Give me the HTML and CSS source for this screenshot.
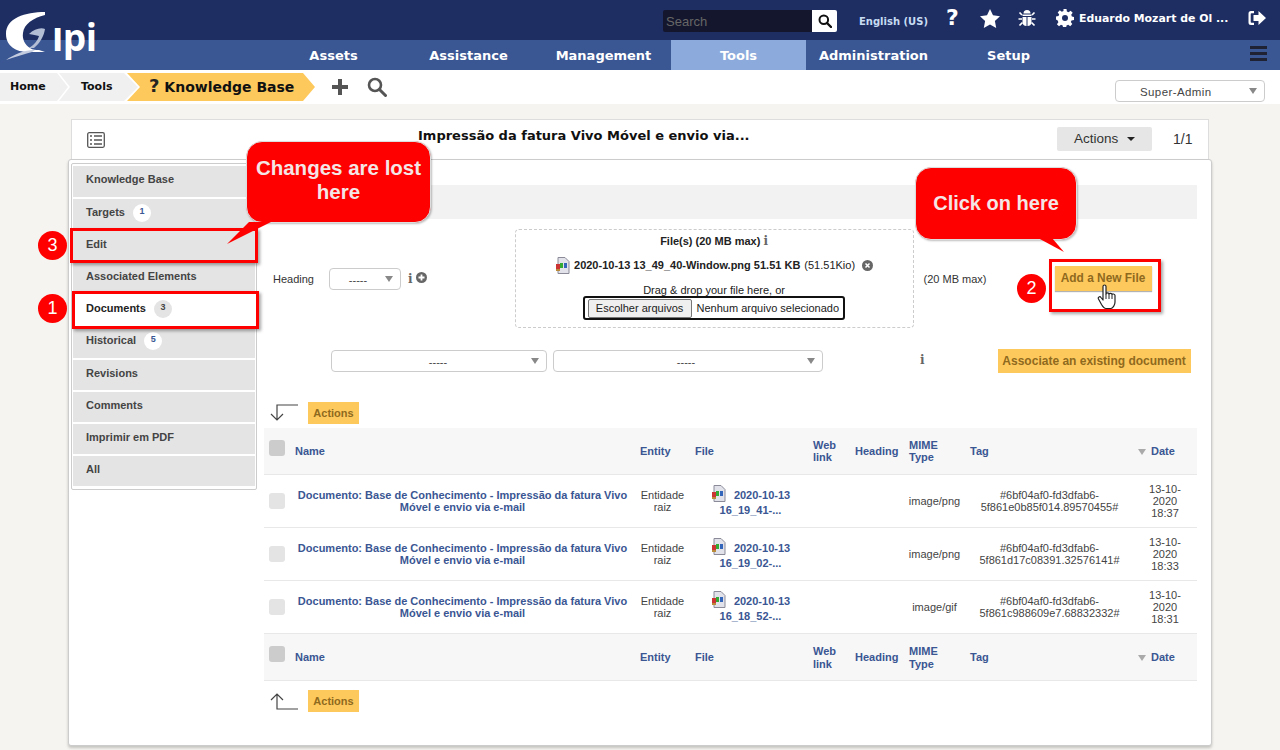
FILE: index.html
```html
<!DOCTYPE html>
<html lang="en">
<head>
    <meta charset="UTF-8">
    <title>Knowledge Base - GLPI</title>
    <link rel="stylesheet" href="styles.css">
</head>
<body>

    <!-- Header -->
    <div class="topbar">
        <div class="search-box">
            <span class="search-input">Search</span>
            <span class="search-btn">
                <svg width="14" height="14" viewBox="0 0 14 14"><circle cx="5.800" cy="5.800" r="4.300" fill="none" stroke="#111" stroke-width="2"/><path d="M9 9l4 4" stroke="#111" stroke-width="2.400" stroke-linecap="round"/></svg>
            </span>
        </div>
        <span class="lang">English (US)</span>
        <span class="help">?</span>
        <svg class="top-icon star" width="20" height="19" viewBox="0 0 20 19"><path d="M10 0l3 6.300 7 .9-5.100 4.800 1.300 6.900L10 15.600 3.800 18.900l1.300-6.900L0 7.200l7-.9z" fill="#fff"/></svg>
        <svg class="top-icon bug" width="18" height="18" viewBox="0 0 18 18"><path d="M5.500 4.500a3.500 3.500 0 0 1 7 0z" fill="#fff"/><path d="M4.500 5.500h9v1.500H4.500zM4.500 8h4v9c-2.500 0-4-1.500-4-4zM9.500 8h4v5c0 2.500-1.500 4-4 4z" fill="#fff"/><path d="M4 6L1.500 3.500M14 6l2.500-2.500M4 10H.5M14 10h3.500M4.500 13.500L1.500 16.500M13.500 13.500l3 3" stroke="#fff" stroke-width="1.700"/></svg>
        <svg class="top-icon gear" width="18" height="18" viewBox="0 0 18 18"><path d="M7.500 0h3l.4 2.500 1.700.7 2-1.500 2.100 2.100-1.500 2 .7 1.700 2.100.5v3l-2.500.4-.7 1.700 1.500 2-2.100 2.100-2-1.500-1.700.7-.4 2.600h-3l-.4-2.500-1.700-.7-2 1.500-2.100-2.100 1.500-2-.7-1.700L0 10.500v-3l2.500-.4.700-1.700-1.500-2 2.100-2.100 2 1.500 1.700-.7z" fill="#fff"/><circle cx="9" cy="9" r="3" fill="#1e2e63"/></svg>
        <span class="user">Eduardo Mozart de Ol ...</span>
        <svg class="top-icon logout" width="18" height="16" viewBox="0 0 18 16"><path d="M6 1H3a2.500 2.500 0 0 0-2.500 2.500v9A2.500 2.500 0 0 0 3 15h3v-2.200H3.500a.8.800 0 0 1-.8-.8V4a.8.800 0 0 1 .8-.8H6z" fill="#fff"/><path d="M10.500 1L18 8l-7.500 7v-4H5.500V5h5z" fill="#fff"/></svg>
    </div>

    <div class="mainnav">
        <a href="#">Assets</a>
        <a href="#">Assistance</a>
        <a href="#">Management</a>
        <a href="#" class="active">Tools</a>
        <a href="#">Administration</a>
        <a href="#">Setup</a>
        <div class="burger"><div></div><div></div><div></div></div>
    </div>

    <!-- Logo lies over both header bars -->
    <div class="logo">
        <svg class="logo-g" width="48" height="50" viewBox="0 0 48 50"><path d="M40 0C20 0 1 6 1 22c0 12 10 18 22 18h17l-6-2c-3 0-6 0-9-2-5-3-8-9-7-15C19 12 28 6 40 3z" fill="#fff"/><path d="M24 22c5-5 12-7 16-5-1 7-5 14-11 19l-5 0c5-3 9-8 10-12-3-1-6-1-10-2z" fill="#b3bed5"/><path d="M1 48c9-6 18-10 29-10l-3 2C19 42 10 45 1 48z" fill="#c4cde0"/></svg>
        <span class="logo-text"><span class="logo-l">l</span>pi</span>
    </div>

    <!-- Breadcrumb -->
    <div class="crumbbar">
        <a href="#" class="crumb crumb-home">Home</a>
        <a href="#" class="crumb crumb-tools">Tools</a>
        <a href="#" class="crumb crumb-current"><b>?</b> Knowledge Base</a>
        <svg class="crumb-add" width="18" height="18" viewBox="0 0 18 18"><path d="M7 1h4v6h6v4h-6v6H7v-6H1V7h6z" fill="#555"/></svg>
        <svg class="crumb-search" width="20" height="20" viewBox="0 0 20 20"><circle cx="8" cy="8" r="6" fill="none" stroke="#555" stroke-width="2.600"/><path d="M12.500 12.500l6 6" stroke="#555" stroke-width="3" stroke-linecap="round"/></svg>
        <div class="profile"><span>Super-Admin</span><i class="caret"></i></div>
    </div>

    <!-- Page -->
    <div class="page">
        <div class="titlebar">
            <svg class="list-icon" width="18" height="16" viewBox="0 0 18 16"><rect x=".7" y=".7" width="16.600" height="14.600" rx="1.500" fill="none" stroke="#555" stroke-width="1.300"/><path d="M3 4h2M3 8h2M3 12h2M7 4h8M7 8h8M7 12h8" stroke="#555" stroke-width="1.500"/></svg>
            <span class="record-title">Impressão da fatura Vivo Móvel e envio via...</span>
            <span class="actions-btn">Actions <i class="caret-dark"></i></span>
            <span class="pager">1/1</span>
        </div>

        <div class="mainbox">
            <ul class="tabs">
                <li>Knowledge Base</li>
                <li>Targets <span class="count">1</span></li>
                <li>Edit</li>
                <li>Associated Elements</li>
                <li class="current">Documents <span class="count">3</span></li>
                <li>Historical <span class="count">5</span></li>
                <li>Revisions</li>
                <li>Comments</li>
                <li>Imprimir em PDF</li>
                <li>All</li>
            </ul>

            <div class="tab-content">
                <div class="form-head"></div>

                <div class="upload-row">
                    <span class="form-label">Heading</span>
                    <div class="select select-heading"><span>-----</span><i class="caret"></i></div>
                    <span class="info">i</span>
                    <svg class="plus-icon" width="11" height="11" viewBox="0 0 11 11"><circle cx="5.500" cy="5.500" r="5.500" fill="#666"/><path d="M5.500 2.500v6M2.500 5.500h6" stroke="#fff" stroke-width="1.800"/></svg>

                    <div class="dropzone">
                        <div class="drop-title">File(s) (20 MB max) <span class="info">i</span></div>
                        <div class="drop-file">
                            <svg width="15" height="17" viewBox="0 0 15 17"><use href="#file-icon"/></svg>
                            <b>2020-10-13 13_49_40-Window.png 51.51 KB</b> (51.51Kio)
                            <svg class="remove-icon" width="11" height="11" viewBox="0 0 11 11"><circle cx="5.500" cy="5.500" r="5.500" fill="#666"/><path d="M3.500 3.500l4 4M7.500 3.500l-4 4" stroke="#fff" stroke-width="1.500"/></svg>
                        </div>
                        <div class="drop-hint">Drag &amp; drop your file here, or</div>
                        <div class="file-input"><span class="file-btn">Escolher arquivos</span><span>Nenhum arquivo selecionado</span></div>
                    </div>

                    <span class="max-size">(20 MB max)</span>
                    <span class="btn btn-add">Add a New File</span>
                </div>

                <div class="associate-row">
                    <div class="select select-a"><span>-----</span><i class="caret"></i></div>
                    <div class="select select-b"><span>-----</span><i class="caret"></i></div>
                    <span class="info">i</span>
                    <span class="btn btn-associate">Associate an existing document</span>
                </div>

                <div class="massive massive-top">
                    <svg width="30" height="18" viewBox="0 0 30 18"><path d="M29 1H8v15M2 10l6 6 6-6" fill="none" stroke="#444" stroke-width="1.200"/></svg>
                    <span class="btn btn-small">Actions</span>
                </div>

                <table class="doc-table">
                    <thead>
                        <tr>
                            <th class="col-check"><span class="check check-head"></span></th>
                            <th class="col-name">Name</th>
                            <th class="col-entity">Entity</th>
                            <th class="col-file">File</th>
                            <th class="col-web">Web link</th>
                            <th class="col-heading">Heading</th>
                            <th class="col-mime">MIME<br>Type</th>
                            <th class="col-tag">Tag</th>
                            <th class="col-date"><i class="sort"></i>Date</th>
                        </tr>
                    </thead>
                    <tbody>
                        <tr>
                            <td><span class="check"></span></td>
                            <td class="doc-name">Documento: Base de Conhecimento - Impressão da fatura Vivo Móvel e envio via e-mail</td>
                            <td class="doc-entity">Entidade raiz</td>
                            <td class="doc-file"><svg width="15" height="17" viewBox="0 0 15 17"><use href="#file-icon"/></svg> 2020-10-13<br>16_19_41-...</td>
                            <td></td>
                            <td></td>
                            <td class="doc-mime">image/png</td>
                            <td>#6bf04af0-fd3dfab6-<br>5f861e0b85f014.89570455#</td>
                            <td>13-10-<br>2020<br>18:37</td>
                        </tr>
                        <tr>
                            <td><span class="check"></span></td>
                            <td class="doc-name">Documento: Base de Conhecimento - Impressão da fatura Vivo Móvel e envio via e-mail</td>
                            <td class="doc-entity">Entidade raiz</td>
                            <td class="doc-file"><svg width="15" height="17" viewBox="0 0 15 17"><use href="#file-icon"/></svg> 2020-10-13<br>16_19_02-...</td>
                            <td></td>
                            <td></td>
                            <td class="doc-mime">image/png</td>
                            <td>#6bf04af0-fd3dfab6-<br>5f861d17c08391.32576141#</td>
                            <td>13-10-<br>2020<br>18:33</td>
                        </tr>
                        <tr>
                            <td><span class="check"></span></td>
                            <td class="doc-name">Documento: Base de Conhecimento - Impressão da fatura Vivo Móvel e envio via e-mail</td>
                            <td class="doc-entity">Entidade raiz</td>
                            <td class="doc-file"><svg width="15" height="17" viewBox="0 0 15 17"><use href="#file-icon"/></svg> 2020-10-13<br>16_18_52-...</td>
                            <td></td>
                            <td></td>
                            <td class="doc-mime">image/gif</td>
                            <td>#6bf04af0-fd3dfab6-<br>5f861c988609e7.68832332#</td>
                            <td>13-10-<br>2020<br>18:31</td>
                        </tr>
                    </tbody>
                    <tfoot>
                        <tr>
                            <th><span class="check check-head"></span></th>
                            <th class="col-name">Name</th>
                            <th class="col-entity">Entity</th>
                            <th class="col-file">File</th>
                            <th class="col-web">Web link</th>
                            <th class="col-heading">Heading</th>
                            <th class="col-mime">MIME<br>Type</th>
                            <th class="col-tag">Tag</th>
                            <th class="col-date"><i class="sort"></i>Date</th>
                        </tr>
                    </tfoot>
                </table>

                <div class="massive massive-bottom">
                    <svg width="30" height="18" viewBox="0 0 30 18"><path d="M29 17H8V2M2 8l6-6 6 6" fill="none" stroke="#444" stroke-width="1.200"/></svg>
                    <span class="btn btn-small">Actions</span>
                </div>
            </div>
        </div>
    </div>

    <!-- Screenshot annotations -->
    <div class="mark mark-edit"></div>
    <div class="mark mark-docs"></div>
    <div class="mark mark-add"></div>
    <span class="step step-3">3</span>
    <span class="step step-1">1</span>
    <span class="step step-2">2</span>

    <div class="callout callout-lost">Changes are lost here</div>
    <svg class="tail tail-lost" width="60" height="40" viewBox="0 0 60 40"><path d="M22 0L0 22 44 0z" fill="#f00"/></svg>
    <div class="callout callout-click">Click on here</div>
    <svg class="tail tail-click" width="30" height="20" viewBox="0 0 30 20"><path d="M0 0L26 14 14 0z" fill="#f00"/></svg>

    <svg class="hand" width="20" height="26" viewBox="0 0 20 26"><path d="M6 2.500a1.500 1.500 0 0 1 3 0V10c0-1.500 3-1.500 3 0 0-1 3-1 3 .5 0-.8 3-.8 3 1V18c0 3-2 6-4 6.500H9C7 24.500 6 23 4.500 20.500L1.500 15c-1-2 1.500-3 2.500-1.500L6 16z" fill="#fff" stroke="#222" stroke-width="1.200" stroke-linejoin="round"/><path d="M9 10v5M12 10v5M15 11v4" stroke="#222"/></svg>

    <svg class="defs">
        <symbol id="file-icon" viewBox="0 0 15 17">
            <path d="M3 .5h7l4 4v12H3z" fill="#e2e2ea" stroke="#8a8a99"/>
            <rect x="1" y="7" width="4" height="5" fill="#c33"/>
            <rect x="5" y="6" width="3" height="5" fill="#3a3"/>
            <rect x="9" y="6" width="3" height="5" fill="#36b"/>
            <rect x="1" y="12" width="4" height="2" fill="#b98a3a"/>
        </symbol>
    </svg>

</body>
</html>
```

FILE: styles.css
```css
/* General Reset */
* {
    margin: 0;
    padding: 0;
    box-sizing: border-box;
}

html, body {
    height: 750px;
    overflow: hidden;
}

body {
    position: relative;
    font-family: "Liberation Sans", Arial, sans-serif;
    font-size: 11px;
    color: #333;
    background-color: #f5f4f0;
}

a {
    text-decoration: none;
}

/* Top bar */
.topbar {
    height: 40px;
    background-color: #1e2e63;
    display: flex;
    align-items: center;
    padding-left: 663px;
    font-family: "DejaVu Sans", sans-serif;
    color: #fff;
}

.search-box {
    display: flex;
    width: 174px;
    height: 22px;
    margin-top: 2px;
    border-radius: 2px;
    overflow: hidden;
}

.search-input {
    flex: 1;
    background-color: #14162e;
    color: #666;
    line-height: 24px;
    padding-left: 3px;
    font-family: "Liberation Sans", sans-serif;
    font-size: 13px;
}

.search-btn {
    width: 25px;
    background-color: #fff;
    display: flex;
    align-items: center;
    justify-content: center;
}

.lang {
    margin-left: 22px;
    margin-top: 2px;
    width: 68px;
    white-space: nowrap;
    font-size: 10px;
    font-weight: bold;
    color: #c7dcf2;
}

.help {
    margin-left: 19px;
    margin-top: -6px;
    font-size: 22px;
    font-weight: bold;
    width: 15px;
}

.top-icon {
    display: block;
}

.star {
    margin-left: 19px;
    margin-top: -4px;
}

.bug {
    margin-left: 18px;
    margin-top: -4px;
}

.gear {
    margin-left: 20px;
    margin-top: -4px;
}

.user {
    margin-left: 5px;
    margin-top: -4px;
    width: 150px;
    white-space: nowrap;
    font-size: 10.900px;
    font-weight: bold;
}

.logout {
    margin-left: 19px;
    margin-top: -4px;
}

/* Main menu */
.mainnav {
    height: 30px;
    background-color: #3a5693;
    display: flex;
    padding-left: 266px;
    position: relative;
    font-family: "DejaVu Sans", sans-serif;
}

.mainnav a {
    width: 135px;
    text-align: center;
    line-height: 32px;
    font-size: 13px;
    font-weight: bold;
    color: #fff;
}

.mainnav a.active {
    background-color: #8caadb;
}

.burger {
    position: absolute;
    right: 13px;
    top: 6px;
    width: 17px;
}

.burger div {
    height: 3px;
    margin-bottom: 3px;
    background-color: #1e2233;
}

/* Logo */
.logo {
    position: absolute;
    left: 5px;
    top: 12px;
    display: flex;
    align-items: flex-start;
}

.logo-g {
    display: block;
}

.logo-text {
    font-family: "Open Sans", sans-serif;
    font-size: 37px;
    font-weight: 700;
    line-height: 48px;
    letter-spacing: -0.5px;
    color: #fff;
    margin-left: -1px;
    margin-top: 1px;
}

/* the l of the logo is cut down so it sits just above the other letters */
.logo-l {
    display: inline-block;
    clip-path: inset(15px 0 0 0);
}

/* Breadcrumb */
.crumbbar {
    height: 34px;
    background-color: #fff;
    display: flex;
    align-items: flex-start;
    padding-top: 3px;
    position: relative;
    font-family: "DejaVu Sans", sans-serif;
}

.crumb {
    display: block;
    height: 28px;
    line-height: 27px;
    font-size: 11px;
    font-weight: bold;
    color: #111;
    background-color: #f0f0f0;
}

.crumb-home {
    width: 68px;
    padding-left: 10px;
    clip-path: polygon(0 0, 57px 0, 68px 50%, 57px 100%, 0 100%);
}

.crumb-tools {
    width: 79px;
    margin-left: -9px;
    padding-left: 22px;
    clip-path: polygon(0 0, 65px 0, 79px 50%, 65px 100%, 0 100%, 11px 50%);
}

.crumb-current {
    width: 188px;
    margin-left: -11px;
    padding-left: 22px;
    font-size: 14px;
    line-height: 28px;
    background-color: #fec95c;
    clip-path: polygon(0 0, 176px 0, 188px 50%, 176px 100%, 0 100%, 13px 50%);
}

.crumb-current b {
    font-size: 18px;
    line-height: 18px;
    color: #222;
}

.crumb-add {
    margin-left: 16px;
    margin-top: 5px;
}

.crumb-search {
    margin-left: 18px;
    margin-top: 4px;
}

.profile {
    position: absolute;
    left: 1115px;
    top: 10px;
    width: 150px;
    height: 22px;
    border: 1px solid #ccc;
    border-radius: 4px;
    background-color: #fff;
    line-height: 22px;
    padding-left: 24px;
    font-family: "Liberation Sans", sans-serif;
    font-size: 11.500px;
    letter-spacing: 0.4px;
    color: #444;
}

.caret {
    position: absolute;
    right: 7px;
    top: 7px;
    width: 0;
    height: 0;
    border-left: 4px solid transparent;
    border-right: 4px solid transparent;
    border-top: 6px solid #888;
}

/* Page */
.page {
    padding: 15px 68px 0;
}

.titlebar {
    height: 41px;
    margin: 0 3px;
    background-color: #fff;
    border: 1px solid #ddd;
    display: flex;
    align-items: flex-start;
    padding-left: 15px;
}

.list-icon {
    margin-top: 12px;
}

.record-title {
    margin-left: 313px;
    margin-top: 8px;
    width: 639px;
    white-space: nowrap;
    font-family: "DejaVu Sans", sans-serif;
    font-size: 13px;
    font-weight: bold;
    color: #111;
}

.actions-btn {
    width: 95px;
    height: 24px;
    margin-top: 7px;
    background-color: #e6e6e6;
    border-radius: 2px;
    text-align: center;
    line-height: 24px;
    font-size: 13.500px;
    color: #333;
}

.caret-dark {
    display: inline-block;
    width: 0;
    height: 0;
    margin-left: 5px;
    vertical-align: 2px;
    border-left: 4px solid transparent;
    border-right: 4px solid transparent;
    border-top: 4px solid #222;
}

.pager {
    margin-left: 21px;
    margin-top: 11px;
    font-size: 14px;
}

.mainbox {
    height: 587px;
    margin-top: -1px;
    position: relative;
    background-color: #fff;
    border: 1px solid #ccc;
    border-radius: 3px;
    box-shadow: 0 2px 3px rgba(0, 0, 0, 0.2);
    display: flex;
}

/* Tabs */
.tabs {
    list-style: none;
    width: 186px;
    height: 327px;
    margin: 3px 0 0 2px;
    border: 1px solid #ccc;
    border-radius: 2px;
    flex-shrink: 0;
    padding: 2.400px 1px 0;
}

.tabs li {
    height: 30.200px;
    margin-bottom: 2px;
    background-color: #e4e4e4;
    line-height: 27px;
    padding-left: 13px;
    font-weight: bold;
    color: #444;
}

.tabs li.current {
    background-color: #fff;
    color: #222;
}

.count {
    display: inline-block;
    width: 18px;
    height: 18px;
    margin-left: 5px;
    border-radius: 50%;
    background-color: #fff;
    text-align: center;
    font-size: 9px;
    line-height: 14px;
    vertical-align: 2px;
    color: #3a5693;
}

.current .count {
    background-color: #e4e4e4;
    color: #444;
}

/* Documents tab */
.tab-content {
    flex: 1;
    padding: 25px 14px 0 7px;
    position: relative;
}

.form-head {
    height: 34px;
    background-color: #f2f2f2;
}

.upload-row {
    display: flex;
    align-items: center;
    height: 99px;
    margin-top: 10px;
    padding-left: 9px;
    font-size: 11px;
}

.form-label {
    width: 56px;
}

.select {
    position: relative;
    height: 22px;
    background-color: #fff;
    border: 1px solid #ccc;
    border-radius: 4px;
    line-height: 22px;
    text-align: center;
    font-size: 11px;
    color: #444;
}

.select-heading {
    width: 72px;
    padding-right: 14px;
    margin-right: 7px;
}

.info {
    font-family: "DejaVu Serif", serif;
    font-weight: bold;
    font-size: 12px;
    color: #666;
}

.plus-icon {
    margin-left: 3px;
    margin-top: -2px;
}

.dropzone {
    width: 399px;
    height: 99px;
    margin-left: 88px;
    border: 1px dashed #ccc;
    border-radius: 4px;
    text-align: center;
    padding-top: 4px;
    color: #222;
}

.drop-title {
    height: 16px;
    font-weight: bold;
}

.drop-file {
    height: 30px;
    display: flex;
    align-items: center;
    justify-content: center;
    gap: 4px;
}

.drop-file b {
    font-weight: bold;
}

.remove-icon {
    margin-left: 3px;
}

.drop-hint {
    margin-top: 4px;
    line-height: 13px;
}

.file-input {
    display: flex;
    align-items: center;
    width: 262px;
    height: 24px;
    margin: -1px 0 0 67px;
    border: 2px solid #111;
    border-radius: 3px;
    gap: 5px;
    line-height: 17px;
    white-space: nowrap;
}

.file-btn {
    display: block;
    width: 104px;
    height: 19px;
    line-height: 16px;
    margin-left: 3px;
    background-color: #efefef;
    border: 1px solid #777;
    border-radius: 2px;
}

.max-size {
    margin-left: 10px;
    width: 131px;
}

.btn {
    background-color: #fec95c;
    color: #8f6a1e;
    font-weight: bold;
    text-align: center;
}

.btn-add {
    width: 97px;
    height: 25px;
    line-height: 24px;
    font-size: 11.900px;
    box-shadow: 0 1px 1px rgba(0, 0, 0, 0.3);
}

.associate-row {
    display: flex;
    align-items: center;
    height: 24px;
    margin-top: 21px;
    padding-left: 67px;
}

.select-a {
    width: 216px;
    padding-right: 2px;
}

.select-b {
    width: 270px;
    margin-left: 6px;
    padding-right: 4px;
}

.associate-row .info {
    margin-left: 97px;
    margin-top: -3px;
}

.btn-associate {
    width: 193px;
    height: 24px;
    margin-left: 73px;
    line-height: 24px;
    font-size: 12px;
}

.massive {
    display: flex;
    align-items: center;
    gap: 9px;
    height: 22px;
    padding-left: 5px;
}

.massive-top {
    margin-top: 29px;
}

.massive-bottom {
    margin-top: 9px;
}

.btn-small {
    width: 51px;
    height: 22px;
    line-height: 22px;
}

/* Documents table */
.doc-table {
    width: 933px;
    margin-top: 4px;
    border-collapse: collapse;
    table-layout: fixed;
    font-size: 11px;
    line-height: 12.300px;
}

.doc-table th {
    height: 46px;
    background-color: #f7f7f7;
    color: #3a5693;
    text-align: left;
    font-weight: bold;
    padding: 1px 0 0 4px;
}

.doc-table tfoot th {
    height: 47px;
    padding-top: 2px;
}

.doc-table thead tr {
    border-bottom: 1px solid #e8e8e8;
}

.doc-table tfoot tr {
    border-bottom: 1px solid #e8e8e8;
}

.doc-table td {
    height: 53px;
    padding-top: 1px;
    text-align: center;
    border-bottom: 1px solid #e8e8e8;
    color: #444;
}

.col-check { width: 27px; }
.col-name { width: 345px; }
.col-entity { width: 55px; }
.col-file { width: 118px; }
.col-web { width: 42px; }
.col-heading { width: 54px; }
.col-mime { width: 61px; }
.col-tag { width: 167px; }
.col-date { width: 64px; }

.doc-table th.col-date {
    padding-left: 5px;
    white-space: nowrap;
}

.check {
    display: block;
    width: 16px;
    height: 16px;
    margin-left: 5px;
    border-radius: 3px;
    background-color: #e4e4e4;
}

.doc-table th .check {
    margin-left: 1px;
    margin-top: -6px;
}

.doc-table tfoot th .check {
    margin-top: -7px;
}

.check-head {
    background-color: #ccc;
}

.doc-table .doc-name {
    font-weight: bold;
    color: #3a5693;
    padding: 1px 6px 0 4px;
}

.doc-table .doc-entity {
    padding-right: 2px;
}

.doc-table .doc-mime {
    padding-right: 2px;
}

.doc-table .doc-file {
    font-weight: bold;
    color: #3a5693;
    line-height: 15px;
    padding-left: 1px;
}

.doc-file svg {
    vertical-align: -3px;
    margin-right: 5px;
}

.sort {
    display: inline-block;
    width: 0;
    height: 0;
    margin-right: 5px;
    border-left: 4px solid transparent;
    border-right: 4px solid transparent;
    border-top: 6px solid #aaa;
}

/* Annotations drawn over the screenshot */
.mark {
    position: absolute;
    border: 3px solid #f00;
    box-shadow: 2px 2px 3px rgba(0, 0, 0, 0.35);
}

.mark-edit {
    left: 70px;
    top: 228px;
    width: 188px;
    height: 35px;
}

.mark-docs {
    left: 72px;
    top: 291px;
    width: 187px;
    height: 38px;
}

.mark-add {
    left: 1049px;
    top: 259px;
    width: 112px;
    height: 53px;
}

.step {
    position: absolute;
    width: 29px;
    height: 29px;
    border-radius: 50%;
    background-color: #f00;
    color: #fff;
    text-align: center;
    line-height: 29px;
    font-size: 18px;
}

.step-3 { left: 38px; top: 231px; }
.step-1 { left: 38px; top: 294px; }
.step-2 { left: 1017px; top: 274px; }

.callout {
    position: absolute;
    background-color: #f00;
    border: 1px solid #ddd;
    border-radius: 16px;
    box-shadow: 1px 1px 2px rgba(0, 0, 0, 0.25);
    color: #f4e6e6;
    text-align: center;
    font-weight: bold;
    font-size: 20.500px;
    line-height: 24px;
}

.callout-lost {
    left: 246px;
    top: 141px;
    width: 185px;
    height: 82px;
    padding: 14px 5px 0;
}

.callout-click {
    left: 915px;
    top: 167px;
    width: 162px;
    height: 73px;
    padding-top: 23px;
    font-size: 20px;
}

.tail {
    position: absolute;
}

.tail-lost {
    left: 227px;
    top: 222px;
}

.tail-click {
    left: 1038px;
    top: 238px;
}

.hand {
    position: absolute;
    left: 1097px;
    top: 284px;
}

.defs {
    position: absolute;
    width: 0;
    height: 0;
}
```
